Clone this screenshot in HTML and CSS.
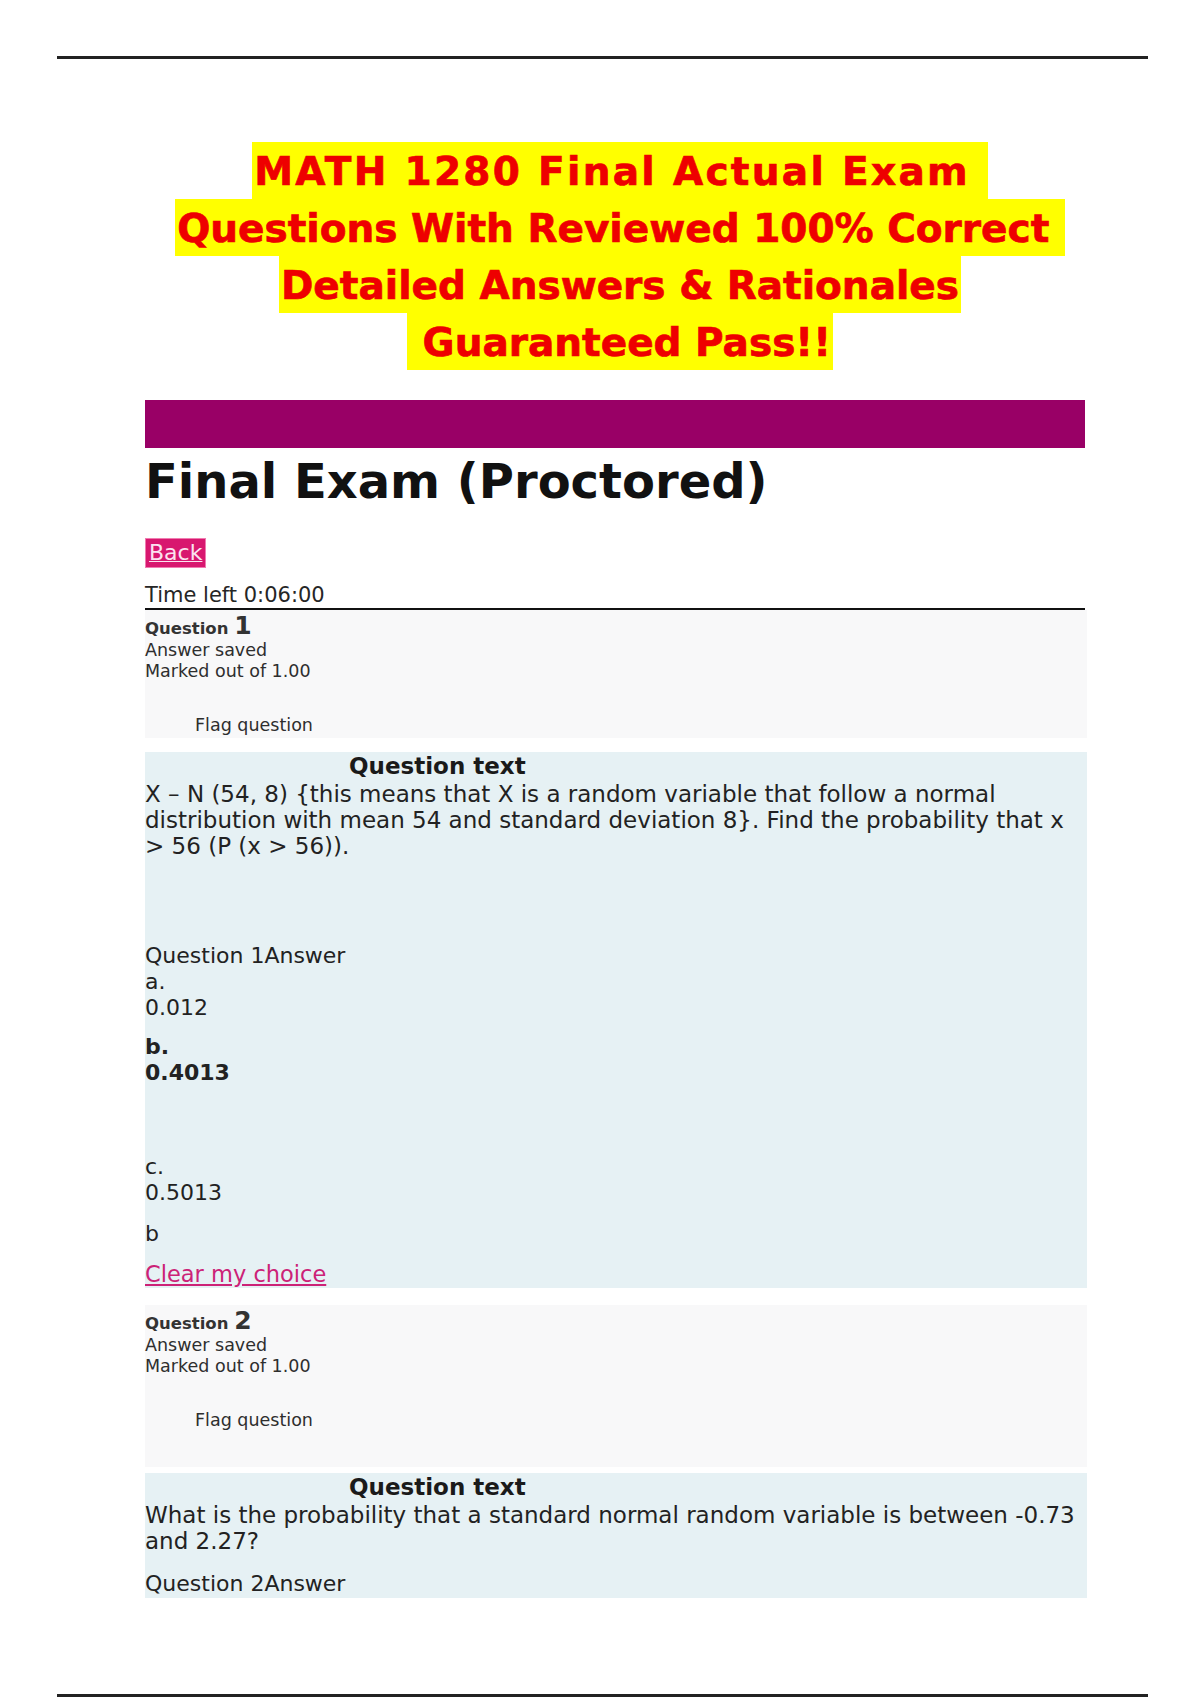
FILE: index.html
```html
<!DOCTYPE html>
<html lang="en">
<head>
<meta charset="utf-8">
<title>MATH 1280 Final Exam</title>
<link rel="stylesheet" href="styles.css">
</head>
<body>
<div class="page">
  <div class="rule"></div>

  <div class="title">
    <div class="tline tline-wide">MATH 1280 Final Actual Exam&nbsp;</div>
    <div class="tline">Questions With Reviewed 100% Correct&nbsp;</div>
    <div class="tline">Detailed Answers &amp; Rationales</div>
    <div class="tline">&nbsp;Guaranteed Pass!!</div>
  </div>

  <div class="col">
    <div class="banner"></div>
    <h1 class="exam-title">Final Exam (Proctored)</h1>
    <a class="back" href="#">Back</a>
    <div class="timer">Time left 0:06:00</div>

    <div class="qinfo qinfo-first">
      <div class="qno">Question <span class="num">1</span></div>
      <div class="state">Answer saved</div>
      <div class="state">Marked out of 1.00</div>
      <div class="flag">Flag question</div>
    </div>

    <div class="qtext qtext-first">
      <div class="qt-head">Question text</div>
      <div class="qt-body">X – N (54, 8) {this means that X is a random variable that follow a normal distribution with mean 54 and standard deviation 8}. Find the probability that x &gt; 56 (P (x &gt; 56)).</div>
      <div class="answers answers-gap">
        <div class="ans-label">Question 1Answer</div>
        <div class="opt">
          <div>a.</div>
          <div>0.012</div>
        </div>
        <div class="opt opt-b opt-selected">
          <div>b.</div>
          <div>0.4013</div>
        </div>
        <div class="opt opt-c">
          <div>c.</div>
          <div>0.5013</div>
        </div>
        <div class="opt opt-key">b</div>
        <a class="clear" href="#">Clear my choice</a>
      </div>
    </div>

    <div class="qinfo qinfo-second">
      <div class="qno">Question <span class="num">2</span></div>
      <div class="state">Answer saved</div>
      <div class="state">Marked out of 1.00</div>
      <div class="flag">Flag question</div>
    </div>

    <div class="qtext qtext-second">
      <div class="qt-head">Question text</div>
      <div class="qt-body">What is the probability that a standard normal random variable is between -0.73 and 2.27?</div>
      <div class="answers answers-gap2">
        <div class="ans-label">Question 2Answer</div>
      </div>
    </div>
  </div>

  <div class="rule rule-bottom"></div>
</div>
</body>
</html>
```

FILE: styles.css
```css
html, body {
  margin: 0;
  padding: 0;
  background: #ffffff;
}

body {
  font-family: "DejaVu Sans", Verdana, sans-serif;
  color: #222222;
}

.page {
  width: 1200px;
  height: 1700px;
  overflow: hidden;
  padding-top: 56px;
  box-sizing: border-box;
}

.rule {
  height: 3px;
  margin: 0 52px 0 57px;
  background: #222222;
}

.rule-bottom {
  margin-top: 96px;
}

/* ---------- highlighted title ---------- */
.title {
  margin: 83px 0 0 145px;
  width: 950px;
}

.tline {
  width: fit-content;
  margin: 0 auto;
  padding: 2px 2px 0;
  height: 55px;
  line-height: 55px;
  background: #ffff00;
  color: #ee0000;
  -webkit-text-stroke: 0.7px #ee0000;
  font-family: "DejaVu Sans", Verdana, sans-serif;
  font-weight: bold;
  font-size: 39px;
  white-space: nowrap;
}

.tline-wide {
  letter-spacing: 2.3px;
}

/* ---------- main column ---------- */
.col {
  margin: 30px 0 0 145px;
  width: 942px;
  font-size: 21px;
  line-height: 26px;
}

.banner {
  height: 48px;
  margin-right: 2px;
  background: #990066;
}

.exam-title {
  margin: 4px 0 0;
  font-size: 48px;
  line-height: 58px;
  font-weight: bold;
  color: #111111;
}

.back {
  display: block;
  width: fit-content;
  margin-top: 28px;
  padding: 0 3px;
  border: 1px solid #f07bb0;
  background: #d8176f;
  color: #fbe3ef;
  font-size: 22px;
  line-height: 28px;
  text-decoration: underline;
  text-decoration-thickness: 1px;
}

.timer {
  margin-top: 14px;
  margin-right: 2px;
  font-size: 21px;
  line-height: 26px;
  border-bottom: 2px solid #111111;
  color: #262626;
}

/* ---------- question info ---------- */
.qinfo {
  background: #f8f8f9;
  padding-top: 2px;
  color: #2e2e2e;
}

.qinfo-first {
  padding-bottom: 2px;
}

.qinfo-second {
  margin-top: 17px;
  padding-bottom: 36px;
}

.qno {
  height: 28px;
  line-height: 28px;
  font-size: 16.5px;
  font-weight: bold;
  color: #333333;
}

.qno .num {
  font-size: 25px;
  line-height: 28px;
}

.state {
  font-size: 17.5px;
  line-height: 21px;
}

.flag {
  margin-top: 33px;
  padding-left: 50px;
  font-size: 17.5px;
  line-height: 21px;
}

/* ---------- question text ---------- */
.qtext {
  background: #e6f1f4;
  padding-bottom: 1px;
}

.qtext-first {
  margin-top: 14px;
}

.qtext-second {
  margin-top: 6px;
}

.qt-head {
  padding: 1px 0 0 204px;
  font-size: 23px;
  line-height: 26px;
  font-weight: bold;
  color: #1a1a1a;
}

.qt-body {
  margin-top: 2px;
  font-size: 23px;
  line-height: 26px;
  color: #222222;
}

.answers {
  font-size: 22px;
  line-height: 26px;
}

.answers-gap {
  margin-top: 84px;
}

.answers-gap2 {
  margin-top: 17px;
}

.opt-b {
  margin-top: 13px;
}

.opt-selected {
  font-weight: bold;
}

.opt-c {
  margin-top: 68px;
}

.opt-key {
  margin-top: 15px;
}

.clear {
  display: block;
  width: fit-content;
  margin-top: 14px;
  font-size: 22.5px;
  color: #cc2277;
  text-decoration: underline;
}
```
